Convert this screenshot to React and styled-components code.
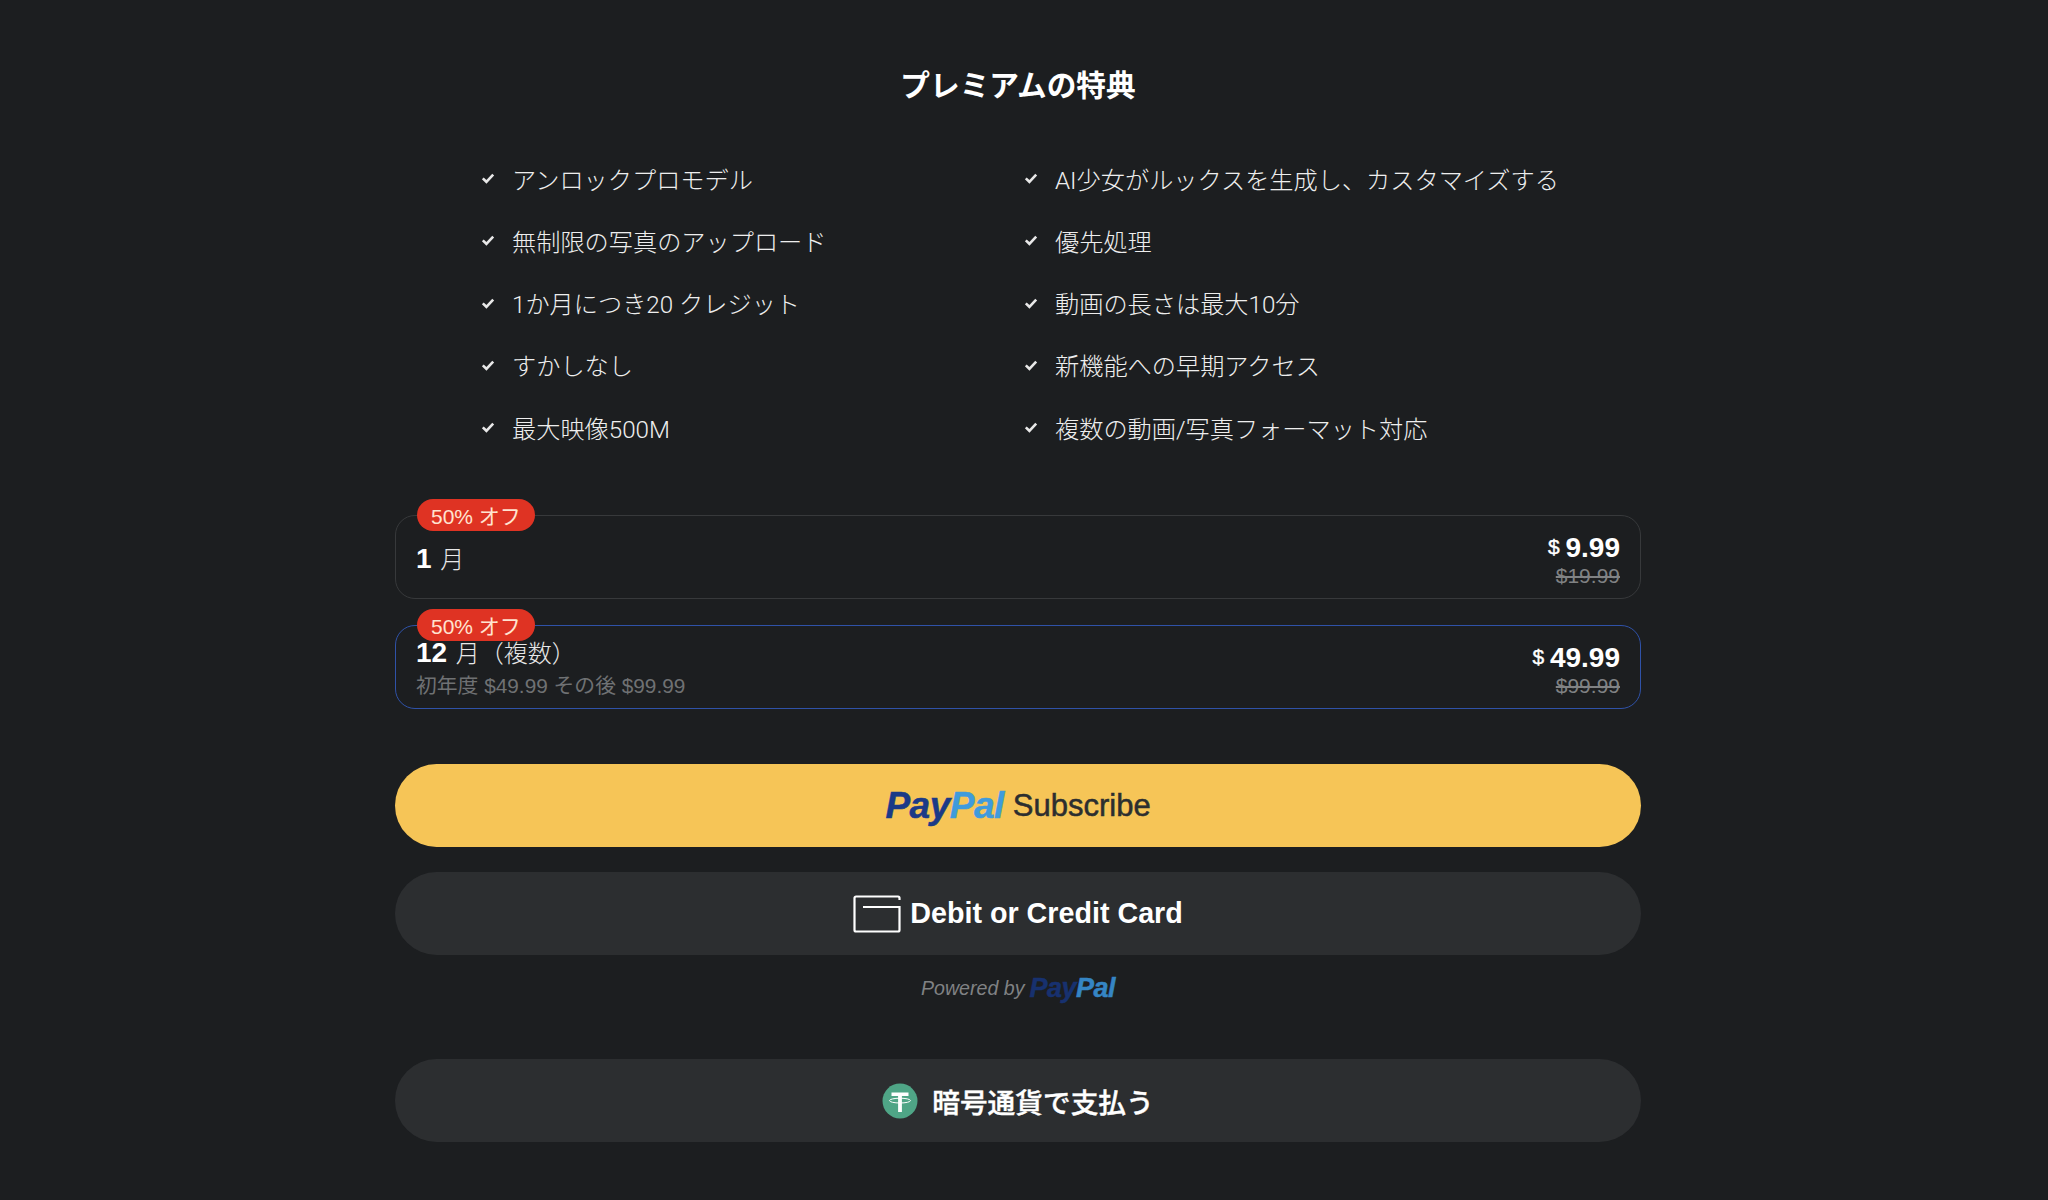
import React from "react";
import styled, { createGlobalStyle } from "styled-components";

const GlobalStyle = createGlobalStyle`
  html, body {
    margin: 0;
    background: #1c1e20;
  }
  body {
    font-family: "Liberation Sans", "Noto Sans CJK JP", sans-serif;
    color: #fff;
  }
`;

const features = [
  "アンロックプロモデル",
  "AI少女がルックスを生成し、カスタマイズする",
  "無制限の写真のアップロード",
  "優先処理",
  "1か月につき20 クレジット",
  "動画の長さは最大10分",
  "すかしなし",
  "新機能への早期アクセス",
  "最大映像500M",
  "複数の動画/写真フォーマット対応",
];

const Check = () => (
  <CheckIcon viewBox="0 0 14 14">
    <path d="M1.8 7.4 L5.4 10.8 L12.2 3.6" fill="none" stroke="#e8e8e8" strokeWidth="2.6" />
  </CheckIcon>
);

const PayPalLogo = ({ size, muted }) => (
  <Logo $size={size}>
    <LogoPart $color={muted ? "#17316f" : "#1b3a87"}>Pay</LogoPart>
    <LogoPart $color={muted ? "#3585c4" : "#3f9bdc"}>Pal</LogoPart>
  </Logo>
);

const TetherIcon = () => (
  <svg width="36" height="36" viewBox="0 0 36 36">
    <circle cx="18" cy="18" r="17.5" fill="#4fa586" />
    <path d="M9.5 9.5h17v3.6h-6.6v16h-3.8v-16H9.5z" fill="#fff" />
    <ellipse cx="18" cy="17.6" rx="10.5" ry="2.4" fill="none" stroke="#fff" strokeWidth="1" />
  </svg>
);

const CardIcon = () => (
  <svg width="48" height="38" viewBox="0 0 48 38">
    <path
      d="M46.5 5V3a1.5 1.5 0 0 0-1.5-1.5H3A1.5 1.5 0 0 0 1.5 3v32A1.5 1.5 0 0 0 3 36.5h42a1.5 1.5 0 0 0 1.5-1.5V12H10"
      fill="none"
      stroke="#fff"
      strokeWidth="2.2"
    />
  </svg>
);

const Plan = ({ selected, months, suffix, note, price, original }) => (
  <PlanCard $selected={selected}>
    <Badge>50% オフ</Badge>
    <PlanInfo>
      <PlanName>
        <strong>{months}</strong> {suffix}
      </PlanName>
      {note && <PlanNote>{note}</PlanNote>}
    </PlanInfo>
    <PriceBox>
      <Price>
        <small>$</small> {price}
      </Price>
      <OldPrice>{original}</OldPrice>
    </PriceBox>
  </PlanCard>
);

export default function App() {
  return (
    <Page>
      <GlobalStyle />
      <Column>
        <Title>プレミアムの特典</Title>
        <FeatureGrid>
          {features.map((text) => (
            <Feature key={text}>
              <Check />
              {text}
            </Feature>
          ))}
        </FeatureGrid>
        <Plans>
          <Plan months="1" suffix="月" price="9.99" original="$19.99" />
          <Plan
            selected
            months="12"
            suffix="月（複数）"
            note="初年度 $49.99 その後 $99.99"
            price="49.99"
            original="$99.99"
          />
        </Plans>
        <PayButton $bg="#f6c557" $color="#2c2e2f" $stroke="0.5px">
          <PayPalLogo size={37} />
          Subscribe
        </PayButton>
        <PayButton $top="25px" $size="28.7px" $weight="700">
          <CardIcon />
          Debit or Credit Card
        </PayButton>
        <Powered>
          Powered by <PayPalLogo size={27} muted />
        </Powered>
        <PayButton $top="54px" $size="27.7px" $weight="500" $gap="14px" $stroke="0.4px">
          <TetherIcon />
          暗号通貨で支払う
        </PayButton>
      </Column>
    </Page>
  );
}

const Page = styled.div`
  width: 2036px;
  height: 1200px;
  overflow: hidden;
`;

const Column = styled.div`
  width: 1246px;
  margin: 0 auto;
  box-sizing: border-box;
  padding-top: 67px;
  display: flex;
  flex-direction: column;
`;

const Title = styled.h1`
  margin: 0;
  font-size: 29.7px;
  line-height: 36px;
  font-weight: 700;
  text-align: center;
  padding-top: 1px;
`;

const FeatureGrid = styled.div`
  margin: 43px 0 0 86px;
  display: grid;
  grid-template-columns: 543px 1fr;
  grid-auto-rows: 62.3px;
`;

const Feature = styled.div`
  display: flex;
  align-items: center;
  height: 62px;
  font-family: Roboto, "Noto Sans CJK JP", sans-serif;
  font-size: 24.2px;
  font-weight: 300;
  color: #eeeeee;
`;

const CheckIcon = styled.svg`
  width: 14px;
  height: 14px;
  margin-right: 17px;
  flex-shrink: 0;
`;

const Plans = styled.div`
  margin-top: 57px;
  display: flex;
  flex-direction: column;
  gap: 26px;
`;

const PlanCard = styled.div`
  position: relative;
  height: 84px;
  box-sizing: border-box;
  padding: 3px 20px 0;
  display: flex;
  align-items: center;
  justify-content: space-between;
  border-radius: 20px;
  border: 1px solid ${(p) => (p.$selected ? "#2f52a8" : "#37393b")};
`;

const Badge = styled.span`
  position: absolute;
  top: -17px;
  left: 21px;
  height: 32px;
  padding: 0 14px;
  display: flex;
  align-items: center;
  border-radius: 16px;
  background: #df3323;
  color: #ffe3d0;
  font-size: 21px;
`;

const PlanInfo = styled.div`
  display: flex;
  flex-direction: column;
`;

const PlanName = styled.div`
  font-size: 24px;
  font-weight: 300;
  line-height: 33px;
  color: #e8e8e8;
  strong {
    font-size: 28px;
    font-weight: 700;
    color: #fff;
    margin-right: 2px;
  }
`;

const PlanNote = styled.div`
  font-size: 20.8px;
  line-height: 31px;
  color: #6f7173;
`;

const PriceBox = styled.div`
  display: flex;
  flex-direction: column;
  align-items: flex-end;
`;

const Price = styled.div`
  font-size: 28px;
  line-height: 33px;
  font-weight: 700;
  small {
    font-size: 21px;
    font-weight: 400;
    vertical-align: 3px;
    -webkit-text-stroke: 0.4px #fff;
    margin-right: -2px;
  }
`;

const OldPrice = styled.div`
  font-size: 21px;
  line-height: 24px;
  color: #808284;
  text-decoration: line-through;
`;

const PayButton = styled.div`
  height: 83px;
  margin-top: ${(p) => p.$top || "55px"};
  flex-shrink: 0;
  display: flex;
  align-items: center;
  justify-content: center;
  gap: ${(p) => p.$gap || "9px"};
  border-radius: 42px;
  background: ${(p) => p.$bg || "#2c2e30"};
  color: ${(p) => p.$color || "#fff"};
  font-size: ${(p) => p.$size || "31px"};
  font-weight: ${(p) => p.$weight || "400"};
  -webkit-text-stroke: ${(p) => p.$stroke || "0"};
`;

const Logo = styled.span`
  font-size: ${(p) => p.$size}px;
  font-weight: 700;
  font-style: italic;
  letter-spacing: -0.5px;
  -webkit-text-stroke: 0.5px currentColor;
`;

const LogoPart = styled.span`
  color: ${(p) => p.$color};
`;

const Powered = styled.div`
  height: 34px;
  margin-top: 16px;
  display: flex;
  align-items: center;
  justify-content: center;
  gap: 5px;
  font-size: 19.6px;
  font-style: italic;
  color: #808284;
`;
